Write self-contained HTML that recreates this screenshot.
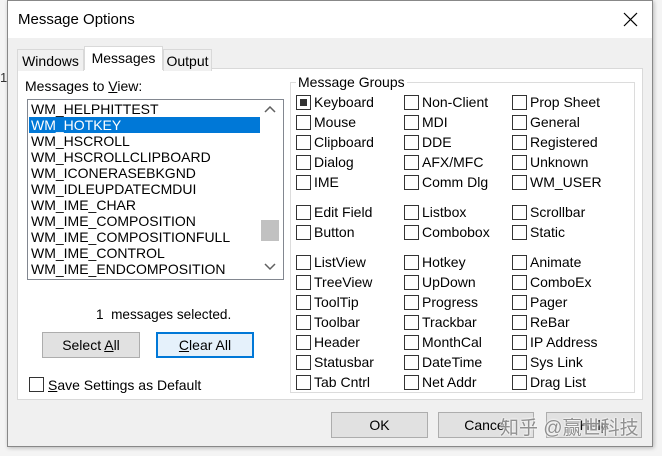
<!DOCTYPE html>
<html><head><style>
body{margin:0;width:662px;height:456px;background:#f4f4f4;position:relative;overflow:hidden;font-family:"Liberation Sans","Noto Sans CJK SC",sans-serif;font-size:14px;color:#000}
.a{position:absolute}
#dlg{left:7px;top:0px;width:646px;height:447px;background:#f0f0f0;border:1px solid #888;box-sizing:border-box;box-shadow:1px 1px 4px rgba(0,0,0,.25)}
#title{left:0;top:0;width:644px;height:37px;background:#fff}
.tab{top:46px;height:22px;border:1px solid #d9d9d9;border-bottom:none;background:#f0f0f0;line-height:22px;text-align:center;box-sizing:border-box}
#panel{left:9px;top:67px;width:626px;height:332px;background:#fff;border:1px solid #d9d9d9;box-sizing:border-box}
.cb{width:13px;height:13px;border:1px solid #333;background:#fff;box-sizing:border-box}
.btn{height:26px;background:#e1e1e1;border:1px solid #adadad;box-sizing:border-box;text-align:center;line-height:24px}
.lb{font-size:14px;line-height:16px}
</style></head><body>
<div class="a" style="left:0;top:70px;width:8px;height:14px;font-size:13px;color:#333">10</div>
<div class="a" id="dlg">
 <div class="a" id="title"></div>
 <div class="a" style="left:10px;top:10px;font-size:15px">Message Options</div>
 <svg class="a" style="left:615px;top:11px" width="15" height="15"><path d="M1 1L14 14M14 1L1 14" stroke="#000" stroke-width="1.2"/></svg>
 <div class="a" id="panel"></div>
 <div class="a tab" style="left:9px;width:67px;top:48px">Windows</div>
 <div class="a tab" style="left:76px;width:79px;top:45px;height:24px;background:#fff">Messages</div>
 <div class="a tab" style="left:155px;width:49px;top:48px">Output</div>
 <div class="a" style="left:17px;top:77px">Messages to <u>V</u>iew:</div>
 <div class="a" style="left:19px;top:98px;width:257px;height:181px;border:1px solid #828790;background:#fff;box-sizing:border-box"></div>
 <div class="a" style="left:21px;top:116px;width:231px;height:16px;background:#0078d7"></div>
 <div class="a lb" style="left:23px;top:100px">WM_HELPHITTEST<br><span style="color:#fff">WM_HOTKEY</span><br>WM_HSCROLL<br>WM_HSCROLLCLIPBOARD<br>WM_ICONERASEBKGND<br>WM_IDLEUPDATECMDUI<br>WM_IME_CHAR<br>WM_IME_COMPOSITION<br>WM_IME_COMPOSITIONFULL<br>WM_IME_CONTROL<br>WM_IME_ENDCOMPOSITION</div>
 <div class="a" style="left:253px;top:219px;width:18px;height:21px;background:#c1c1c1"></div>
 <svg class="a" style="left:256px;top:105px" width="12" height="8"><path d="M1 6L6 1L11 6" stroke="#606060" fill="none" stroke-width="1.5"/></svg>
 <svg class="a" style="left:256px;top:262px" width="12" height="8"><path d="M1 1L6 6L11 1" stroke="#606060" fill="none" stroke-width="1.5"/></svg>
 <div class="a" style="left:88px;top:306px;font-size:13.6px">1&nbsp; messages selected.</div>
 <div class="a btn" style="left:34px;top:331px;width:98px">Select <u>A</u>ll</div>
 <div class="a btn" style="left:148px;top:331px;width:98px;border:2px solid #0078d7;background:#e5f1fb;line-height:22px"><u>C</u>lear All</div>
 <div class="a cb" style="left:21px;top:376px;width:15px;height:15px"></div>
 <div class="a" style="left:40px;top:376px"><u>S</u>ave Settings as Default</div>
 <div class="a" style="left:282px;top:81px;width:345px;height:311px;border:1px solid #dcdcdc;box-sizing:border-box"></div>
 <div class="a" style="left:288px;top:73px;background:#fff;padding:0 2px">Message Groups</div>
 <div id="grp"></div>
 <div class="a btn" style="left:323px;top:411px;width:97px">OK</div>
 <div class="a btn" style="left:430px;top:411px;width:96px">Cancel</div>
 <div class="a btn" style="left:538px;top:411px;width:96px">Help</div>
 <div class="a" style="left:492px;top:412px;font-size:19px;color:rgba(110,110,110,.75);text-shadow:0 0 2px #fff,0 0 2px #fff">知乎 @赢世科技</div>
</div>
<script>
var cols=[["Keyboard","Mouse","Clipboard","Dialog","IME","","Edit Field","Button","","ListView","TreeView","ToolTip","Toolbar","Header","Statusbar","Tab Cntrl"],
["Non-Client","MDI","DDE","AFX/MFC","Comm Dlg","","Listbox","Combobox","","Hotkey","UpDown","Progress","Trackbar","MonthCal","DateTime","Net Addr"],
["Prop Sheet","General","Registered","Unknown","WM_USER","","Scrollbar","Static","","Animate","ComboEx","Pager","ReBar","IP Address","Sys Link","Drag List"]];
var ys=[100,120,140,160,180,0,210,230,0,260,280,300,320,340,360,380];var h="";
cols.forEach(function(c,ci){var x=288+ci*108;c.forEach(function(t,i){if(!t)return;var y=ys[i];
h+='<div class="a cb" style="left:'+x+'px;top:'+(y-6)+'px;width:15px;height:15px">'+(ci==0&&i==0?'<div style="margin:3px;width:7px;height:7px;background:#333"></div>':'')+'</div><div class="a" style="left:'+(x+18)+'px;top:'+(y-7)+'px">'+t+'</div>';});});
document.getElementById("grp").outerHTML=h;
</script>
</body></html>
